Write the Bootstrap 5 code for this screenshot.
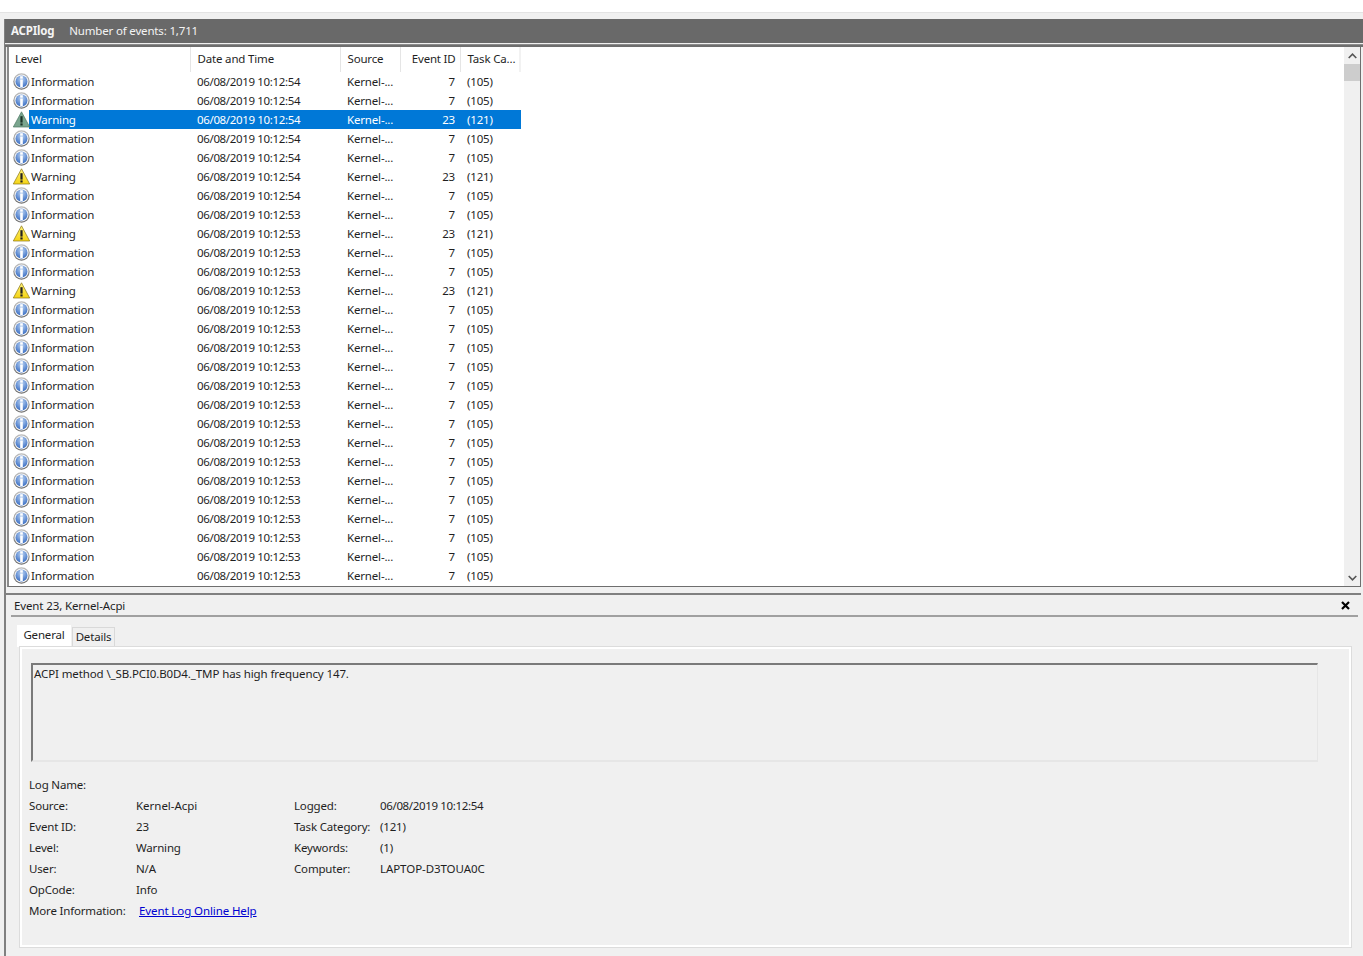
<!DOCTYPE html>
<html lang="en">
<head>
<meta charset="utf-8">
<title>ACPIlog</title>
<link href="https://cdn.jsdelivr.net/npm/bootstrap@5.3.0/dist/css/bootstrap.min.css" rel="stylesheet">
<style>
html,body{height:956px;overflow:hidden}
body{background:#f0f0f0;color:#1f1f1f;font-family:"Noto Sans","Open Sans",sans-serif;font-size:11.5px;line-height:19px;letter-spacing:-.17px}
.icondefs{display:block;width:0;height:0;overflow:hidden}
.topstrip{height:13px;background:#fff;border-bottom:1px solid #e3e3e3}
.workarea{height:943px;padding:6px 2px 0 4px}
.workin{height:100%;border-left:2px solid #808080}
.loghead{height:24px;background:#696969;color:#f4f4f4;line-height:23px;padding-left:6px;margin:0 -2px 0 -1px}
.loghead b{font-weight:700;margin-right:12px}
.logrule{height:4px;margin:0 -2px 0 -1px;background:linear-gradient(#f0f0f0 0 1px,#8c8c8c 1px 2px,#6e6e6e 2px 4px)}
.listframe{height:540px;margin-left:1px;border:1px solid #6e6e6e;border-top:0;border-left:2px solid #8a8a8a;background:#fff}
.evtable{table-layout:fixed;width:512px;margin:0;border-collapse:collapse;--bs-table-bg:transparent;color:inherit}
.evtable th,.evtable td{padding:0 5px 0 7px;height:19px;white-space:nowrap;overflow:hidden;font-weight:400;border:0;color:#1f1f1f;background:transparent;box-shadow:none}
.evtable th{height:25px;border-right:1px solid #e5e5e5;line-height:24px;vertical-align:top}
.evtable th:first-child{padding-left:6px}
.evtable th.num{padding-right:4px;letter-spacing:-.2px}
.evtable th:last-child{border-right:0;background:linear-gradient(90deg,transparent 59px,#e5e5e5 59px 60px,transparent 60px)}
.evtable td{line-height:19px}
.evtable td:nth-child(2),.logtime{letter-spacing:-.35px}
.evtable td.lvl{padding:0 0 0 4px}
.lvlin{display:flex;align-items:center;height:19px}
.lvlin svg{flex:none;width:17px;height:17px;margin-right:1px}
.lvlin .lvltext{flex:1}
.evtable .picked td{background:#0078d7;color:#fff}
.evtable .picked td.lvl{background:linear-gradient(90deg,#fff 20px,#0078d7 20px)}
.evtable .num{text-align:right}
.sbar{width:16px;background:#f0f0f0}
.sbar .arrow{height:17px;padding-top:6px}
.sbar .thumb{height:17px;background:#cdcdcd}
.sbar svg{display:block;margin:auto}
.detail{height:353px;margin:6px 0 0 0;border-top:2px solid #808080;padding:0 0 0 5px}
.dethead{height:19px;padding-top:1px;line-height:19px;margin-right:3px;border-bottom:2px solid #a0a0a0;padding-left:3px;box-sizing:content-box;letter-spacing:-.12px}
.dethead svg{margin-right:8px}
.tabzone{padding:8px 10px 0 6px}
.wintabs{border:0;gap:1px;height:22px;align-items:flex-end;margin:0}
.wintabs .nav-link{border-radius:0;color:#1f1f1f;padding:0;font-size:11.5px;text-align:center;line-height:18px;height:20px;border:1px solid #d9d9d9;border-bottom:0;background:#f0f0f0;margin:0}
.wintabs .nav-link.active{height:22px;width:54px;background:#fff;border:0;line-height:19px;color:#1f1f1f}
.wintabs .tab2{width:43px}
.tabbody{height:300px;margin-left:3px;border:2px solid #fff;outline:1px solid #dcdcdc;padding:14px 31px 0 9px}
.msgbox{height:99px;border:2px solid #a5a5a5;border-top-color:#7a7a7a;border-left-color:#7a7a7a;border-right:1px solid #e6e6e6;border-bottom:2px solid #e6e6e6;padding:0 1px;line-height:17px;background:#f0f0f0;letter-spacing:-.11px}
.fields{display:grid;grid-template-columns:107px 158px 86px 1fr;grid-auto-rows:21px;line-height:21px;margin:12px 0 0 -2px}
.fields a{color:#0000d0;margin-left:3px;letter-spacing:-.1px}
.hostname{letter-spacing:-.07px}
.fields .wideval{letter-spacing:-.02px}
</style>
</head>
<body>
<svg class="icondefs">
<defs>
<radialGradient id="bluefill" cx="50%" cy="30%" r="75%"><stop offset="0" stop-color="#b9d2f2"/><stop offset="1" stop-color="#2f66c0"/></radialGradient>
<linearGradient id="ringfill" x1="0" y1="0" x2="0" y2="1"><stop offset="0" stop-color="#bdbdbd"/><stop offset="1" stop-color="#6f6f6f"/></linearGradient>
<linearGradient id="yelfill" x1="0" y1="0" x2="0" y2="1"><stop offset="0" stop-color="#fff27a"/><stop offset="1" stop-color="#f5d414"/></linearGradient>
<symbol id="ico-info" viewBox="0 0 17 17">
<circle cx="8.5" cy="8.5" r="8.2" fill="url(#ringfill)"/>
<circle cx="8.5" cy="8.5" r="7" fill="#f6f6f6"/>
<circle cx="8.5" cy="8.5" r="6" fill="url(#bluefill)"/>
<rect x="7.2" y="3.2" width="2.6" height="2.4" fill="#fff"/>
<rect x="7.2" y="6.6" width="2.6" height="7.4" fill="#fff"/>
</symbol>
<symbol id="ico-warn" viewBox="0 0 17 17">
<path d="M8.5 .8 16.7 16H.3Z" fill="url(#yelfill)" stroke="#8a7618" stroke-width=".7" stroke-linejoin="round"/>
<rect x="7.4" y="5.2" width="2.2" height="6.4" fill="#222"/>
<rect x="7.4" y="12.4" width="2.2" height="2.1" fill="#222"/>
</symbol>
<symbol id="ico-warnsel" viewBox="0 0 17 17">
<path d="M8.5 .8 16.7 16H.3Z" fill="#7aa58e" stroke="#4f7a66" stroke-width=".7" stroke-linejoin="round"/>
<rect x="7.4" y="5.2" width="2.2" height="6.4" fill="#1c3328"/>
<rect x="7.4" y="12.4" width="2.2" height="2.1" fill="#1c3328"/>
</symbol>
</defs>
</svg>
<div class="topstrip"></div>
<div class="workarea">
<div class="workin">
<div class="loghead"><b>ACPIlog</b> Number of events: 1,711</div>
<div class="logrule"></div>
<div class="listframe d-flex">
<div class="flex-grow-1 overflow-hidden">
<table class="table evtable">
<colgroup><col style="width:181px"><col style="width:150px"><col style="width:60px"><col style="width:60px"><col style="width:61px"></colgroup>
<thead><tr><th>Level</th><th>Date and Time</th><th>Source</th><th class="num">Event ID</th><th>Task Ca...</th></tr></thead>
<tbody>
<tr><td class="lvl"><div class="lvlin"><svg><use href="#ico-info"/></svg><div class="lvltext">Information</div></div></td><td>06/08/2019 10:12:54</td><td>Kernel-...</td><td class="num">7</td><td>(105)</td></tr>
<tr><td class="lvl"><div class="lvlin"><svg><use href="#ico-info"/></svg><div class="lvltext">Information</div></div></td><td>06/08/2019 10:12:54</td><td>Kernel-...</td><td class="num">7</td><td>(105)</td></tr>
<tr class="picked"><td class="lvl"><div class="lvlin"><svg><use href="#ico-warnsel"/></svg><div class="lvltext">Warning</div></div></td><td>06/08/2019 10:12:54</td><td>Kernel-...</td><td class="num">23</td><td>(121)</td></tr>
<tr><td class="lvl"><div class="lvlin"><svg><use href="#ico-info"/></svg><div class="lvltext">Information</div></div></td><td>06/08/2019 10:12:54</td><td>Kernel-...</td><td class="num">7</td><td>(105)</td></tr>
<tr><td class="lvl"><div class="lvlin"><svg><use href="#ico-info"/></svg><div class="lvltext">Information</div></div></td><td>06/08/2019 10:12:54</td><td>Kernel-...</td><td class="num">7</td><td>(105)</td></tr>
<tr><td class="lvl"><div class="lvlin"><svg><use href="#ico-warn"/></svg><div class="lvltext">Warning</div></div></td><td>06/08/2019 10:12:54</td><td>Kernel-...</td><td class="num">23</td><td>(121)</td></tr>
<tr><td class="lvl"><div class="lvlin"><svg><use href="#ico-info"/></svg><div class="lvltext">Information</div></div></td><td>06/08/2019 10:12:54</td><td>Kernel-...</td><td class="num">7</td><td>(105)</td></tr>
<tr><td class="lvl"><div class="lvlin"><svg><use href="#ico-info"/></svg><div class="lvltext">Information</div></div></td><td>06/08/2019 10:12:53</td><td>Kernel-...</td><td class="num">7</td><td>(105)</td></tr>
<tr><td class="lvl"><div class="lvlin"><svg><use href="#ico-warn"/></svg><div class="lvltext">Warning</div></div></td><td>06/08/2019 10:12:53</td><td>Kernel-...</td><td class="num">23</td><td>(121)</td></tr>
<tr><td class="lvl"><div class="lvlin"><svg><use href="#ico-info"/></svg><div class="lvltext">Information</div></div></td><td>06/08/2019 10:12:53</td><td>Kernel-...</td><td class="num">7</td><td>(105)</td></tr>
<tr><td class="lvl"><div class="lvlin"><svg><use href="#ico-info"/></svg><div class="lvltext">Information</div></div></td><td>06/08/2019 10:12:53</td><td>Kernel-...</td><td class="num">7</td><td>(105)</td></tr>
<tr><td class="lvl"><div class="lvlin"><svg><use href="#ico-warn"/></svg><div class="lvltext">Warning</div></div></td><td>06/08/2019 10:12:53</td><td>Kernel-...</td><td class="num">23</td><td>(121)</td></tr>
<tr><td class="lvl"><div class="lvlin"><svg><use href="#ico-info"/></svg><div class="lvltext">Information</div></div></td><td>06/08/2019 10:12:53</td><td>Kernel-...</td><td class="num">7</td><td>(105)</td></tr>
<tr><td class="lvl"><div class="lvlin"><svg><use href="#ico-info"/></svg><div class="lvltext">Information</div></div></td><td>06/08/2019 10:12:53</td><td>Kernel-...</td><td class="num">7</td><td>(105)</td></tr>
<tr><td class="lvl"><div class="lvlin"><svg><use href="#ico-info"/></svg><div class="lvltext">Information</div></div></td><td>06/08/2019 10:12:53</td><td>Kernel-...</td><td class="num">7</td><td>(105)</td></tr>
<tr><td class="lvl"><div class="lvlin"><svg><use href="#ico-info"/></svg><div class="lvltext">Information</div></div></td><td>06/08/2019 10:12:53</td><td>Kernel-...</td><td class="num">7</td><td>(105)</td></tr>
<tr><td class="lvl"><div class="lvlin"><svg><use href="#ico-info"/></svg><div class="lvltext">Information</div></div></td><td>06/08/2019 10:12:53</td><td>Kernel-...</td><td class="num">7</td><td>(105)</td></tr>
<tr><td class="lvl"><div class="lvlin"><svg><use href="#ico-info"/></svg><div class="lvltext">Information</div></div></td><td>06/08/2019 10:12:53</td><td>Kernel-...</td><td class="num">7</td><td>(105)</td></tr>
<tr><td class="lvl"><div class="lvlin"><svg><use href="#ico-info"/></svg><div class="lvltext">Information</div></div></td><td>06/08/2019 10:12:53</td><td>Kernel-...</td><td class="num">7</td><td>(105)</td></tr>
<tr><td class="lvl"><div class="lvlin"><svg><use href="#ico-info"/></svg><div class="lvltext">Information</div></div></td><td>06/08/2019 10:12:53</td><td>Kernel-...</td><td class="num">7</td><td>(105)</td></tr>
<tr><td class="lvl"><div class="lvlin"><svg><use href="#ico-info"/></svg><div class="lvltext">Information</div></div></td><td>06/08/2019 10:12:53</td><td>Kernel-...</td><td class="num">7</td><td>(105)</td></tr>
<tr><td class="lvl"><div class="lvlin"><svg><use href="#ico-info"/></svg><div class="lvltext">Information</div></div></td><td>06/08/2019 10:12:53</td><td>Kernel-...</td><td class="num">7</td><td>(105)</td></tr>
<tr><td class="lvl"><div class="lvlin"><svg><use href="#ico-info"/></svg><div class="lvltext">Information</div></div></td><td>06/08/2019 10:12:53</td><td>Kernel-...</td><td class="num">7</td><td>(105)</td></tr>
<tr><td class="lvl"><div class="lvlin"><svg><use href="#ico-info"/></svg><div class="lvltext">Information</div></div></td><td>06/08/2019 10:12:53</td><td>Kernel-...</td><td class="num">7</td><td>(105)</td></tr>
<tr><td class="lvl"><div class="lvlin"><svg><use href="#ico-info"/></svg><div class="lvltext">Information</div></div></td><td>06/08/2019 10:12:53</td><td>Kernel-...</td><td class="num">7</td><td>(105)</td></tr>
<tr><td class="lvl"><div class="lvlin"><svg><use href="#ico-info"/></svg><div class="lvltext">Information</div></div></td><td>06/08/2019 10:12:53</td><td>Kernel-...</td><td class="num">7</td><td>(105)</td></tr>
<tr><td class="lvl"><div class="lvlin"><svg><use href="#ico-info"/></svg><div class="lvltext">Information</div></div></td><td>06/08/2019 10:12:53</td><td>Kernel-...</td><td class="num">7</td><td>(105)</td></tr>
</tbody>
</table>
</div>
<div class="sbar d-flex flex-column">
<div class="arrow"><svg width="9" height="6" viewBox="0 0 9 6"><path d="M.7 5 4.5 1.2 8.3 5" fill="none" stroke="#555" stroke-width="1.6"/></svg></div>
<div class="thumb"></div>
<div class="arrow mt-auto"><svg width="9" height="6" viewBox="0 0 9 6"><path d="M.7 1 4.5 4.8 8.3 1" fill="none" stroke="#555" stroke-width="1.6"/></svg></div>
</div>
</div>
<div class="detail">
<div class="dethead d-flex justify-content-between align-items-center">Event 23, Kernel-Acpi
<svg width="9" height="9" viewBox="0 0 9 9"><path d="M1 1 8 8M8 1 1 8" stroke="#000" stroke-width="2.2"/></svg></div>
<div class="tabzone">
<ul class="nav nav-tabs wintabs">
<li class="nav-item"><a class="nav-link active" href="#">General</a></li>
<li class="nav-item"><a class="nav-link tab2" href="#">Details</a></li>
</ul>
<div class="tabbody">
<div class="msgbox">ACPI method \_SB.PCI0.B0D4._TMP has high frequency 147.</div>
<div class="fields">
<div>Log Name:</div><div></div><div></div><div></div>
<div>Source:</div><div class="wideval">Kernel-Acpi</div><div>Logged:</div><div class="logtime">06/08/2019 10:12:54</div>
<div>Event ID:</div><div>23</div><div>Task Category:</div><div>(121)</div>
<div>Level:</div><div>Warning</div><div>Keywords:</div><div>(1)</div>
<div>User:</div><div>N/A</div><div>Computer:</div><div class="hostname">LAPTOP-D3TOUA0C</div>
<div>OpCode:</div><div>Info</div><div></div><div></div>
<div>More Information:</div><div class="text-nowrap"><a href="#">Event Log Online Help</a></div><div></div><div></div>
</div>
</div>
</div>
</div>
</div>
</div>
<script src="https://cdn.jsdelivr.net/npm/bootstrap@5.3.0/dist/js/bootstrap.bundle.min.js"></script>
</body>
</html>
